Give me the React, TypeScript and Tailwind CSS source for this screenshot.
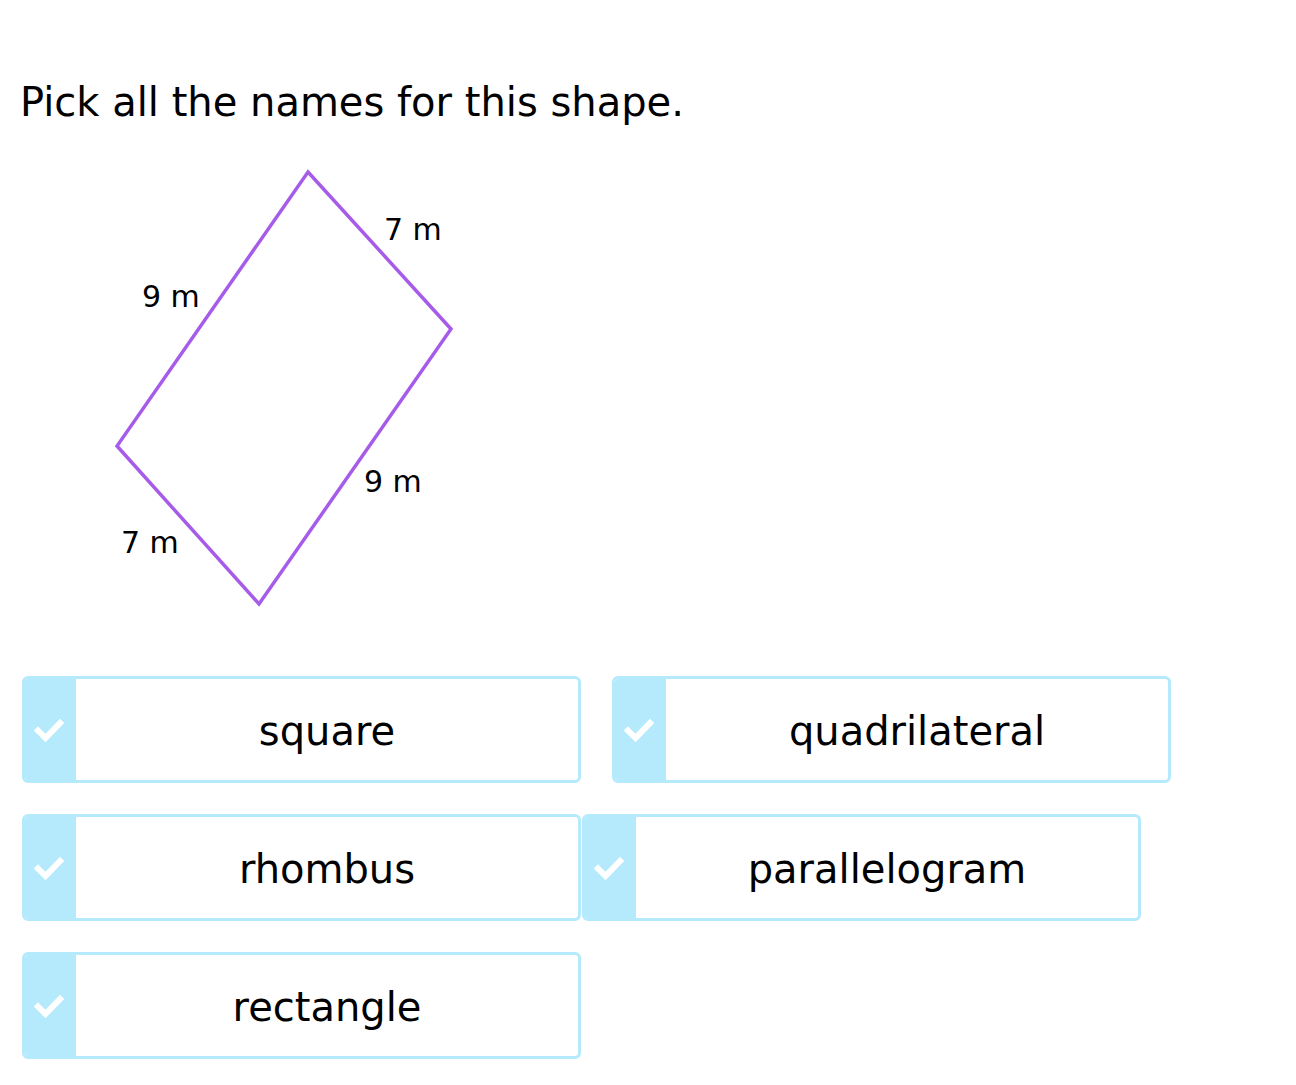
const options: { label: string; gap: string }[][] = [
  [
    { label: "square", gap: "" },
    { label: "quadrilateral", gap: "ml-[31px]" },
  ],
  [
    { label: "rhombus", gap: "" },
    { label: "parallelogram", gap: "ml-px" },
  ],
  [{ label: "rectangle", gap: "" }],
];

function Check() {
  return (
    <svg width="30" height="26" viewBox="0 0 30 26" className="block">
      <path d="M4 13.5 L11.5 21 L26 6" fill="none" stroke="#ffffff" strokeWidth="6" strokeLinecap="square" />
    </svg>
  );
}

function Option({ label, className }: { label: string; className: string }) {
  return (
    <div className={`flex h-[107px] w-[559px] overflow-hidden rounded-[6px] border-[3px] border-[#b5eafd] bg-white ${className}`}>
      <div className="flex w-[51px] shrink-0 items-center justify-center bg-[#b5eafd] pr-[3px]">
        <Check />
      </div>
      <div className="flex flex-1 items-center justify-center pt-[3px] text-[40px] text-black">{label}</div>
    </div>
  );
}

export default function App() {
  return (
    <div className="min-h-[1085px] bg-white font-['DejaVu_Sans',Verdana,sans-serif] text-black">
      <h1 className="pl-[20px] pt-[80px] text-[40px] font-normal leading-[45px]">Pick all the names for this shape.</h1>
      <svg width="600" height="460" viewBox="0 0 600 460" className="mt-[35px] block">
        <polygon points="308,12 451,169 259,444 117,286" fill="none" stroke="#a65ce9" strokeWidth="3.5" />
        <g fontFamily="DejaVu Sans, Verdana, sans-serif" fontSize="30" fill="#000">
          <text x="384" y="80">7 m</text>
          <text x="142" y="147">9 m</text>
          <text x="364" y="332">9 m</text>
          <text x="121" y="393">7 m</text>
        </g>
      </svg>
      <div className="mt-[56px] flex flex-col gap-[31px] pl-[22px]">
        {options.map((row, i) => (
          <div key={i} className="flex">
            {row.map(o => <Option key={o.label} label={o.label} className={o.gap} />)}
          </div>
        ))}
      </div>
    </div>
  );
}
